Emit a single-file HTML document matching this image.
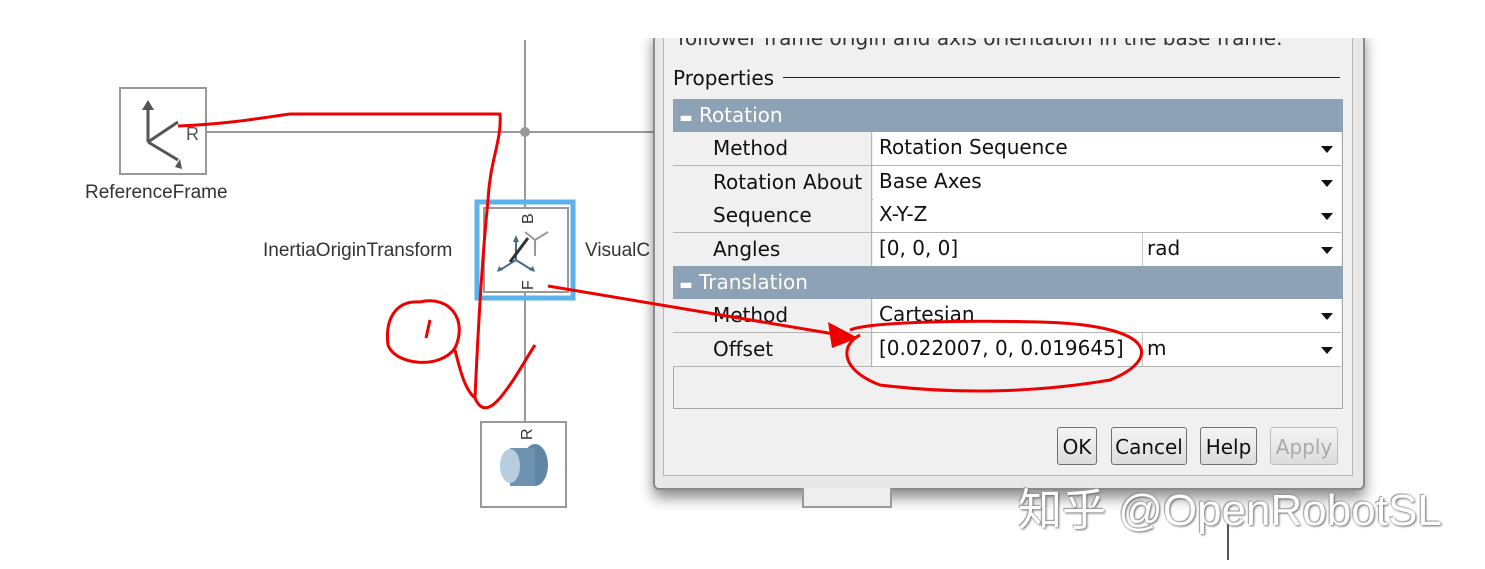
<!DOCTYPE html><html><head><meta charset="utf-8"><style>
body{margin:0;width:1485px;height:569px;background:#fff;position:relative;overflow:hidden;font-family:"Liberation Sans",sans-serif}
.a{position:absolute}
.dlg{left:653px;top:30px;width:708px;height:458px;background:#e8e8e8;border:2px solid #8a8a8a;border-top:none;border-radius:0 0 6px 6px;box-shadow:0 8px 14px rgba(0,0,0,.45)}
.in{left:663px;top:30px;width:688px;height:445px;background:#f0f0f0;border:1px solid #b8b8b8;border-top:none}
.t{font-family:"DejaVu Sans","Liberation Sans",sans-serif;font-size:20px;color:#111}
.row{left:673px;width:668px;height:33px;border-bottom:1px solid #b4b4b4}
.lab{position:absolute;left:0;width:199px;height:33px;background:#f0f0f0;border-right:1px solid #b4b4b4;box-sizing:border-box;padding-left:40px;line-height:33px}
.val{position:absolute;left:200px;right:0;height:33px;background:#fff;padding-left:6px;line-height:30px}
.hd{left:673px;width:670px;height:33px;background:#8ea2b5;color:#fff;line-height:33px}
.arr{position:absolute;right:8px;top:14px;width:0;height:0;border-left:6px solid transparent;border-right:6px solid transparent;border-top:7px solid #111}
.btn{top:427px;height:38px;border:1px solid #707070;border-radius:3px;background:linear-gradient(#f4f4f4,#dcdcdc);text-align:center;line-height:38px;box-sizing:border-box}
</style></head><body>
<svg class="a" style="left:0;top:0" width="1485" height="569">
<line x1="525" y1="40" x2="525" y2="422" stroke="#999" stroke-width="2"/>
<line x1="205" y1="132" x2="655" y2="132" stroke="#999" stroke-width="2"/>
<circle cx="525" cy="132" r="5" fill="#999"/>
<line x1="1228" y1="520" x2="1228" y2="560" stroke="#555" stroke-width="2"/>
<rect x="120" y="88" width="86" height="86" fill="none" stroke="#999" stroke-width="2"/>
<path d="M148 142V108M148 142L178 122M148 142L178 160" stroke="#555" stroke-width="3" fill="none"/>
<path d="M142 110l6-10 6 10zM175 167l5-8 2 10z" fill="#555"/>
<text x="186" y="140" font-size="18" fill="#555" font-family="Liberation Sans">R</text>
<rect x="477" y="202" width="96" height="96" fill="none" stroke="#5db3e8" stroke-width="5"/>
<rect x="484" y="208" width="84" height="84" fill="#fff" stroke="#999" stroke-width="2"/>
<path d="M516 260V242M516 260L500 270M516 260L532 270" stroke="#456c8a" stroke-width="2" fill="none"/>
<path d="M513 242l3-7 3 7zM497 272l2-6 4 4zM535 272l-6-2 4-4z" fill="#456c8a"/>
<path d="M535 240l-10-8M535 240l13-8M535 240v16" stroke="#999" stroke-width="2" fill="none"/>
<line x1="510" y1="262" x2="528" y2="238" stroke="#333" stroke-width="3"/>
<text x="0" y="0" font-size="16" fill="#333" transform="translate(533,224) rotate(-90)">B</text>
<text x="0" y="0" font-size="16" fill="#333" transform="translate(533,290) rotate(-90)">F</text>
<rect x="481" y="422" width="85" height="85" fill="#fff" stroke="#999" stroke-width="2"/>
<text x="0" y="0" font-size="16" fill="#333" transform="translate(532,440) rotate(-90)">R</text>
<ellipse cx="535" cy="465" rx="13" ry="21" fill="#5f86a5"/>
<path d="M510 448h25v38h-25z" fill="#6e93b1"/>
<ellipse cx="510" cy="466" rx="10" ry="17" fill="#b7cde0"/>
</svg>
<div class="a" style="left:85px;top:182px;font-size:19px;color:#333">ReferenceFrame</div>
<div class="a" style="left:263px;top:240px;font-size:19px;color:#333">InertiaOriginTransform</div>
<div class="a" style="left:585px;top:240px;font-size:19px;color:#333">VisualC</div>
<div class="a dlg"></div>
<div class="a in"></div>
<div class="a t" style="left:678px;top:26px;color:#333">follower frame origin and axis orientation in the base frame.</div>
<div class="a" style="left:600px;top:0;width:800px;height:38px;background:#fff"></div>
<div class="a t" style="left:673px;top:66px">Properties</div>
<div class="a" style="left:783px;top:77px;width:557px;height:1px;background:#222"></div>
<div class="a" style="left:673px;top:99px;width:670px;height:310px;background:#f0f0f0;border:1px solid #a8a8a8;box-sizing:border-box"></div>
<div class="a hd t" style="top:99px;color:#fff">&nbsp;<span style="font-size:14px">▬</span> Rotation</div>
<div class="a row t" style="top:132px"><div class="lab">Method</div><div class="val">Rotation Sequence<i class="arr"></i></div></div>
<div class="a row t" style="top:166px"><div class="lab">Rotation About</div><div class="val">Base Axes<i class="arr"></i></div></div>
<div class="a row t" style="top:199px"><div class="lab">Sequence</div><div class="val">X-Y-Z<i class="arr"></i></div></div>
<div class="a row t" style="top:233px"><div class="lab">Angles</div><div class="val">[0, 0, 0]<span style="position:absolute;left:269px;top:0;bottom:0;border-left:1px solid #c8c8c8;padding-left:4px">rad</span><i class="arr"></i></div></div>
<div class="a hd t" style="top:266px;color:#fff">&nbsp;<span style="font-size:14px">▬</span> Translation</div>
<div class="a row t" style="top:299px"><div class="lab">Method</div><div class="val">Cartesian<i class="arr"></i></div></div>
<div class="a row t" style="top:333px"><div class="lab">Offset</div><div class="val">[0.022007, 0, 0.019645]<span style="position:absolute;left:269px;top:0;bottom:0;border-left:1px solid #c8c8c8;padding-left:4px">m</span><i class="arr"></i></div></div>
<div class="a btn t" style="left:1057px;width:40px">OK</div>
<div class="a btn t" style="left:1111px;width:76px">Cancel</div>
<div class="a btn t" style="left:1200px;width:57px">Help</div>
<div class="a btn t" style="left:1270px;width:68px;color:#aaa;border-color:#bbb">Apply</div>
<div class="a" style="left:802px;top:488px;width:86px;height:18px;border:2px solid #999;border-top:none;background:#eee"></div>
<svg class="a" style="left:0;top:0" width="1485" height="569">
<g stroke="#e00" stroke-width="3" fill="none">
<path d="M178 126C230 124 260 118 290 114L500 114C502 140 490 160 488 200C482 260 478 330 475 398C480 410 488 412 500 398C515 380 525 360 535 345"/>
<path d="M420 302C395 300 385 320 388 345C395 365 440 370 455 348C468 320 450 295 420 302M430 320l-4 18M455 350C460 370 465 390 475 398"/>
<path d="M548 286L840 335"/>
<path d="M850 330C870 322 960 320 1040 322C1160 325 1160 360 1110 380C1040 392 960 395 880 385C840 370 840 345 860 335"/>
</g>
<path d="M858 338l-30-16 4 26z" fill="#e00"/>
</svg>
<div class="a" style="left:1018px;top:474px;font-size:44px;color:#fff;text-shadow:1px 1px 2px #666,-1px -1px 1px #999;font-family:'Liberation Sans','Noto Sans CJK SC',sans-serif">知乎 @OpenRobotSL</div>
</body></html>
